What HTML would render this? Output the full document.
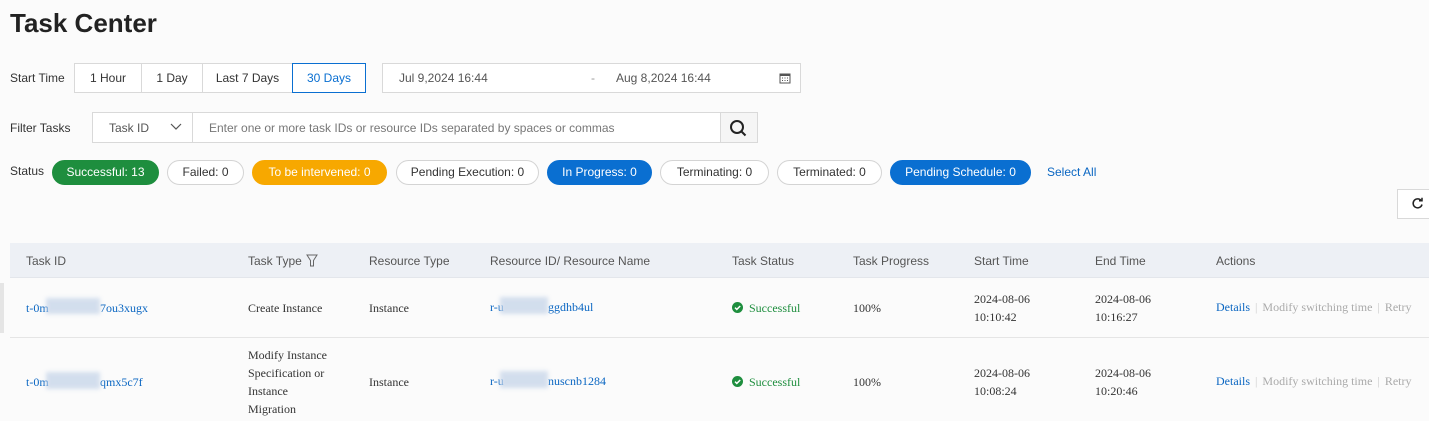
<!DOCTYPE html>
<html><head><meta charset="utf-8"><style>
*{box-sizing:border-box;margin:0;padding:0}
body{width:1429px;height:421px;overflow:hidden;background:#fbfbfb;font-family:"Liberation Sans",sans-serif;color:#333;position:relative;font-size:12px}
.a{position:absolute;white-space:nowrap}
.seg{position:absolute;top:63px;height:30px;border:1px solid #d9d9d9;background:#fff;text-align:center;line-height:28px;font-size:12px;color:#333}
.pill{position:absolute;top:160px;height:25px;border-radius:13px;border:1px solid #d4d4d4;background:#fff;text-align:center;line-height:23px;font-size:12px;color:#333}
.th{position:absolute;top:254px;font-size:12px;color:#555}
.td{position:absolute;font-family:"Liberation Serif",serif;font-size:12px;color:#333;line-height:18px}
.lk{color:#0a66c2}
.sep{color:#ccc;margin:0 5px}
.blur{position:absolute;background:#c9d7ea;opacity:.8;filter:blur(2px)}
</style></head><body>
<div class="a" style="left:10px;top:8px;font-size:26px;font-weight:bold;color:#222">Task Center</div>

<div class="a" style="left:10px;top:71px">Start Time</div>
<div class="seg" style="left:74px;width:68px">1 Hour</div>
<div class="seg" style="left:141px;width:62px">1 Day</div>
<div class="seg" style="left:202px;width:91px">Last 7 Days</div>
<div class="seg" style="left:292px;width:74px;border-color:#0a6fd1;color:#0a6fd1">30 Days</div>
<div class="seg" style="left:382px;width:419px;text-align:left;color:#555">
<span class="a" style="left:16px">Jul 9,2024 16:44</span>
<span class="a" style="left:208px;color:#999">-</span>
<span class="a" style="left:233px">Aug 8,2024 16:44</span>
<svg class="a" style="left:396px;top:8px" width="12" height="12" viewBox="0 0 12 12"><rect x="1" y="2" width="10" height="9" fill="none" stroke="#555"/><rect x="1" y="2" width="10" height="2" fill="#555"/><path d="M3 6h1M5.5 6h1M8 6h1M3 8.5h1M5.5 8.5h1M8 8.5h1" stroke="#555"/></svg>
</div>

<div class="a" style="left:10px;top:121px">Filter Tasks</div>
<div class="a" style="left:92px;top:112px;width:666px;height:31px;border:1px solid #d9d9d9;background:#fff"></div>
<div class="a" style="left:109px;top:121px;color:#555">Task ID</div>
<svg class="a" style="left:170px;top:123px" width="12" height="8"><path d="M1 1l5 5 5-5" fill="none" stroke="#555" stroke-width="1.2"/></svg>
<div class="a" style="left:192px;top:112px;width:1px;height:31px;background:#d9d9d9"></div>
<div class="a" style="left:209px;top:121px;color:#777">Enter one or more task IDs or resource IDs separated by spaces or commas</div>
<div class="a" style="left:720px;top:112px;width:38px;height:31px;border:1px solid #d9d9d9;background:#f5f5f5"></div>
<svg class="a" style="left:729px;top:119px" width="18" height="18"><circle cx="8" cy="8" r="6" fill="none" stroke="#222" stroke-width="2"/><path d="M12.5 12.5l4 4" stroke="#222" stroke-width="2"/></svg>

<div class="a" style="left:10px;top:164px">Status</div>
<div class="pill" style="left:52px;width:107px;background:#1e8e3e;border-color:#1e8e3e;color:#fff">Successful: 13</div>
<div class="pill" style="left:167px;width:77px">Failed: 0</div>
<div class="pill" style="left:252px;width:135px;background:#f7a800;border-color:#f7a800;color:#fff">To be intervened: 0</div>
<div class="pill" style="left:396px;width:143px">Pending Execution: 0</div>
<div class="pill" style="left:547px;width:105px;background:#0a6fd1;border-color:#0a6fd1;color:#fff">In Progress: 0</div>
<div class="pill" style="left:660px;width:109px">Terminating: 0</div>
<div class="pill" style="left:777px;width:105px">Terminated: 0</div>
<div class="pill" style="left:890px;width:141px;background:#0a6fd1;border-color:#0a6fd1;color:#fff">Pending Schedule: 0</div>
<div class="a lk" style="left:1047px;top:165px">Select All</div>

<div class="a" style="left:1397px;top:189px;width:40px;height:30px;border:1px solid #d9d9d9;background:#fff"></div>
<svg class="a" style="left:1411px;top:197px" width="13" height="13" viewBox="0 0 13 13"><path d="M10.5 4A4.5 4.5 0 1 0 11 7.5" fill="none" stroke="#222" stroke-width="1.5"/><path d="M8 3.8h3V0.8" fill="none" stroke="#222" stroke-width="1.5"/></svg>

<div class="a" style="left:0;top:283px;width:4px;height:50px;background:#e5e5e5"></div>
<div class="a" style="left:10px;top:243px;width:1419px;height:35px;background:#edf0f5;border-bottom:1px solid #e3e6eb"></div>
<div class="th" style="left:26px">Task ID</div>
<div class="th" style="left:248px">Task Type</div>
<svg class="a" style="left:306px;top:254px" width="12" height="14"><path d="M1 1h10L7.5 6.5V12h-3V6.5z" fill="none" stroke="#666"/></svg>
<div class="th" style="left:369px">Resource Type</div>
<div class="th" style="left:490px">Resource ID/ Resource Name</div>
<div class="th" style="left:732px">Task Status</div>
<div class="th" style="left:853px">Task Progress</div>
<div class="th" style="left:974px">Start Time</div>
<div class="th" style="left:1095px">End Time</div>
<div class="th" style="left:1216px">Actions</div>
<div class="a" style="left:10px;top:337px;width:1419px;height:1px;background:#e5e5e5"></div>

<div class="td lk" style="left:26px;top:299px">t-0m</div>
<div class="td lk" style="left:100px;top:299px">7ou3xugx</div>
<div class="blur" style="left:46px;top:298px;width:54px;height:16px"></div>
<div class="td" style="left:248px;top:299px">Create Instance</div>
<div class="td" style="left:369px;top:299px">Instance</div>
<div class="td lk" style="left:490px;top:298px">r-u</div>
<div class="td lk" style="left:548px;top:298px">ggdhb4ul</div>
<div class="blur" style="left:500px;top:297px;width:48px;height:17px"></div>
<svg class="a" style="left:732px;top:302px" width="11" height="11"><circle cx="5.5" cy="5.5" r="5.5" fill="#1e8e3e"/><path d="M3 5.6l1.8 1.8L8.2 4" fill="none" stroke="#fff" stroke-width="1.5"/></svg>
<div class="td" style="left:749px;top:299px;color:#1e8e3e">Successful</div>
<div class="td" style="left:853px;top:299px">100%</div>
<div class="td" style="left:974px;top:290px">2024-08-06<br>10:10:42</div>
<div class="td" style="left:1095px;top:290px">2024-08-06<br>10:16:27</div>
<div class="td" style="left:1216px;top:298px"><span class="lk">Details</span><span class="sep">|</span><span style="color:#aaa">Modify switching time</span><span class="sep">|</span><span style="color:#aaa">Retry</span></div>

<div class="td lk" style="left:26px;top:373px">t-0m</div>
<div class="td lk" style="left:100px;top:373px">qmx5c7f</div>
<div class="blur" style="left:46px;top:372px;width:54px;height:17px"></div>
<div class="td" style="left:248px;top:346px">Modify Instance<br>Specification or<br>Instance<br>Migration</div>
<div class="td" style="left:369px;top:373px">Instance</div>
<div class="td lk" style="left:490px;top:372px">r-u</div>
<div class="td lk" style="left:548px;top:372px">nuscnb1284</div>
<div class="blur" style="left:500px;top:371px;width:48px;height:17px"></div>
<svg class="a" style="left:732px;top:376px" width="11" height="11"><circle cx="5.5" cy="5.5" r="5.5" fill="#1e8e3e"/><path d="M3 5.6l1.8 1.8L8.2 4" fill="none" stroke="#fff" stroke-width="1.5"/></svg>
<div class="td" style="left:749px;top:373px;color:#1e8e3e">Successful</div>
<div class="td" style="left:853px;top:373px">100%</div>
<div class="td" style="left:974px;top:364px">2024-08-06<br>10:08:24</div>
<div class="td" style="left:1095px;top:364px">2024-08-06<br>10:20:46</div>
<div class="td" style="left:1216px;top:372px"><span class="lk">Details</span><span class="sep">|</span><span style="color:#aaa">Modify switching time</span><span class="sep">|</span><span style="color:#aaa">Retry</span></div>
</body></html>
